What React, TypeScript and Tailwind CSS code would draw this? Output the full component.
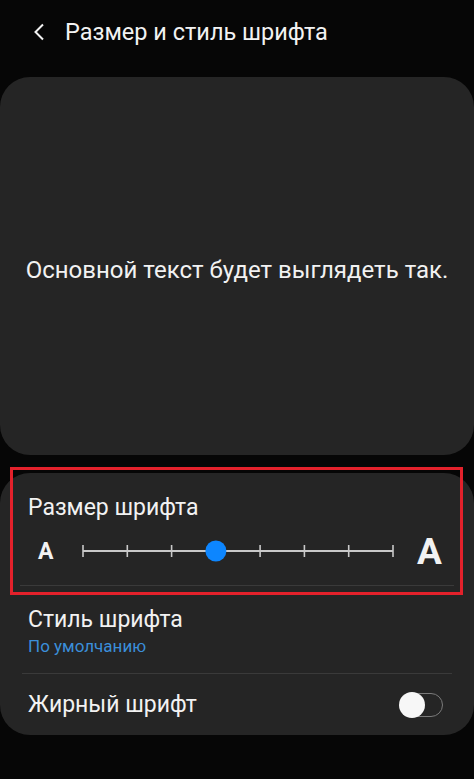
import React from "react";

const ticks = [1, 45.3, 89.6, 133.9, 178.1, 222.4, 266.7, 311];

function SizeSlider({ value }: { value: number }) {
  return (
    <svg width="312" height="26" viewBox="0 0 312 26" className="block">
      <line x1="1" y1="13" x2="311" y2="13" stroke="#c9c9c9" strokeWidth="2" />
      {ticks.map((x, i) => (
        <line key={i} x1={x} y1="7" x2={x} y2="19" stroke="#c9c9c9" strokeWidth="1.6" />
      ))}
      <circle cx={ticks[value]} cy="13" r="10.5" fill="#0d86ff" />
    </svg>
  );
}

function Toggle() {
  return (
    <div className="relative w-[43px] h-[24px]">
      <div className="absolute inset-0 rounded-full border-[1.5px] border-[#7a7a7a]" />
      <div className="absolute left-[-1px] top-[-1px] w-[26px] h-[26px] rounded-full bg-[#f7f7f7]" />
    </div>
  );
}

export default function App() {
  return (
    <div
      className="w-[474px] h-[779px] bg-[#060606] overflow-hidden text-[#f2f2f2]"
      style={{ fontFamily: "Roboto, 'Noto Sans', sans-serif" }}
    >
      {/* Header */}
      <div className="h-[64px] flex items-center pl-[33px]">
        <svg width="12" height="18" viewBox="0 0 12 18" className="block">
          <path d="M10 1.5 L2.5 9 L10 16.5" fill="none" stroke="#f2f2f2" strokeWidth="2" />
        </svg>
        <span className="ml-[20px] text-[23.5px] leading-[30px]">Размер и стиль шрифта</span>
      </div>

      {/* Preview */}
      <div className="mt-[13px] h-[378px] rounded-[30px] bg-[#252525] flex items-center justify-center">
        <span className="text-[24px] leading-[30px] mt-[8px]">Основной текст будет выглядеть так.</span>
      </div>

      {/* Settings card */}
      <div className="relative mt-[18px] rounded-[30px] bg-[#252525]">
        <div className="px-[28px] pt-[21px]">
          <div className="text-[23px] leading-[28px]">Размер шрифта</div>
          <div className="mt-[14px] h-[30px] flex items-center">
            <span className="ml-[10px] w-[16px] text-[23px] font-bold leading-none">A</span>
            <div className="ml-[28px]">
              <SizeSlider value={3} />
            </div>
            <span className="ml-[23px] text-[37px] font-bold leading-none">A</span>
          </div>
        </div>
        <div className="mx-[20px] mt-[19px] h-px bg-[#3a3a3a]" />

        <div className="px-[28px] pt-[20px]">
          <div className="text-[23px] leading-[28px]">Стиль шрифта</div>
          <div className="mt-[2px] text-[17px] leading-[20px] text-[#3b8fda]">По умолчанию</div>
        </div>
        <div className="mx-[22px] mt-[17px] h-px bg-[#3a3a3a]" />

        <div className="pl-[28px] pr-[31px] pt-[17px] pb-[16px] flex items-center justify-between">
          <span className="text-[23px] leading-[28px]">Жирный шрифт</span>
          <Toggle />
        </div>

        {/* highlight frame */}
        <div className="absolute left-[10px] top-[-6px] w-[453px] h-[128px] border-[3px] border-[#e3212b] pointer-events-none" />
      </div>
    </div>
  );
}
